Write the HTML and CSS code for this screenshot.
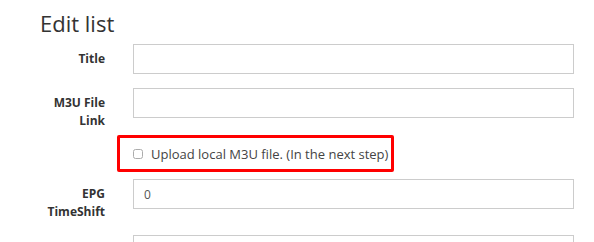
FILE: index.html
```html
<!DOCTYPE html>
<html lang="en">
<head>
    <meta charset="UTF-8">
    <title>Edit list</title>
    <link rel="stylesheet" href="styles.css">
</head>
<body>
    <div class="page">
        <h1 class="page-title">Edit list</h1>

        <form class="list-form">
            <div class="form-row">
                <label class="form-label" for="title">Title</label>
                <div class="form-field">
                    <input type="text" id="title" class="form-input">
                </div>
            </div>

            <div class="form-row">
                <label class="form-label" for="m3uLink">M3U File Link</label>
                <div class="form-field">
                    <input type="text" id="m3uLink" class="form-input">
                </div>
            </div>

            <!-- highlighted option -->
            <div class="form-row check-row">
                <div class="highlight-box">
                    <label class="check-label">
                        <input type="checkbox" class="check-input">
                        Upload local M3U file. (In the next step)
                    </label>
                </div>
            </div>

            <div class="form-row">
                <label class="form-label" for="epgShift">EPG TimeShift</label>
                <div class="form-field">
                    <input type="text" id="epgShift" class="form-input" value="0">
                </div>
            </div>

            <div class="form-row">
                <label class="form-label" for="extra"></label>
                <div class="form-field">
                    <input type="text" id="extra" class="form-input">
                </div>
            </div>
        </form>
    </div>
</body>
</html>
```

FILE: styles.css
```css
* {
    margin: 0;
    padding: 0;
    box-sizing: border-box;
}

body {
    font-family: 'Open Sans', 'Liberation Sans', sans-serif;
    background: #fff;
    color: #333;
    overflow: hidden;
}

.page {
    padding: 8px 20px 0 40px;
}

.page-title {
    font-size: 22px;
    font-weight: 400;
    line-height: 30px;
    color: #333;
    margin-bottom: 6px;
}

.form-row {
    display: flex;
    align-items: flex-start;
    gap: 28px;
    margin-bottom: 14px;
}

.form-label {
    width: 65px;
    flex-shrink: 0;
    text-align: right;
    font-size: 12px;
    font-weight: 700;
    line-height: 18px;
    padding-top: 6px;
    color: #333;
}

.form-field {
    flex: 1;
}

.form-input {
    display: block;
    width: 441px;
    height: 30px;
    border: 1px solid #ccc;
    padding: 4px 10px;
    font-family: inherit;
    font-size: 12px;
    color: #555;
    background: #fff;
}

.check-row {
    margin-top: -9px;
    margin-bottom: 7px;
    padding-left: 77px;
}

.highlight-box {
    width: 277px;
    height: 37px;
    border: 3px solid #f00;
    border-radius: 2px;
    display: flex;
    align-items: center;
    padding-left: 13px;
}

.check-label {
    display: flex;
    align-items: center;
    gap: 8px;
    font-size: 13px;
    color: #444;
}

.check-input {
    width: 10px;
    height: 10px;
    margin: 0;
    opacity: 0.6;
}
```
